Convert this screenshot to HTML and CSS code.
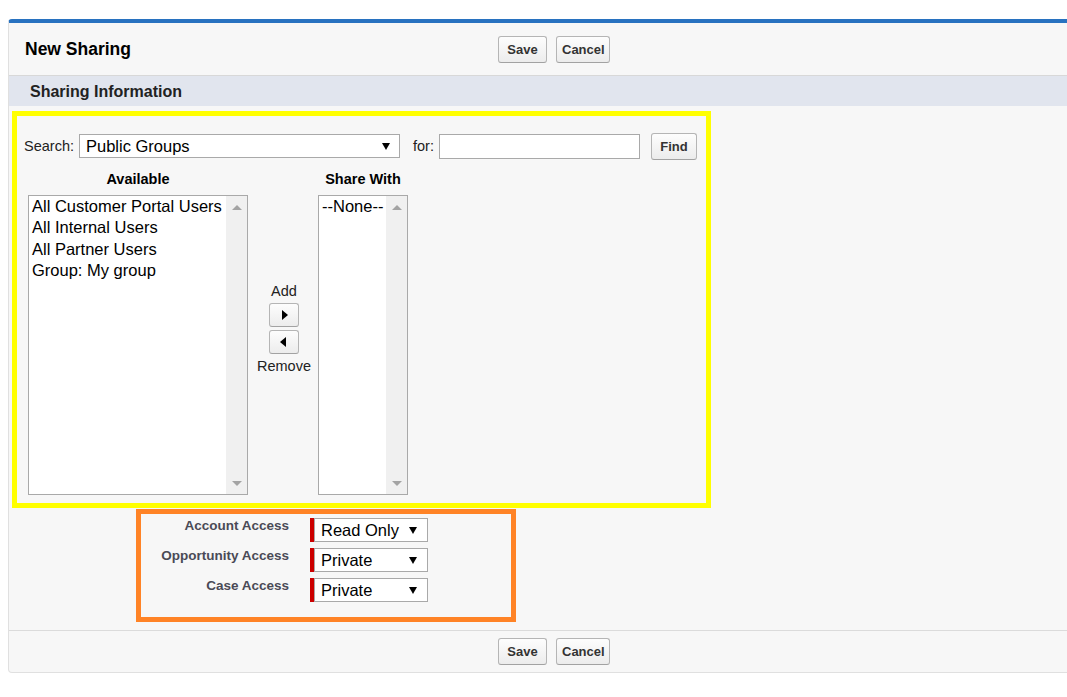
FILE: index.html
```html
<!DOCTYPE html>
<html lang="en">

<head>
    <meta charset="UTF-8">
    <title>New Sharing</title>
    <link rel="stylesheet" href="styles.css">
</head>

<body>
    <div class="page-block">
        <div class="pb-header">
            <h2 class="pb-title">New Sharing</h2>
            <div class="pb-buttons">
                <button class="btn" type="button">Save</button>
                <button class="btn" type="button">Cancel</button>
            </div>
        </div>

        <h3 class="section-title">Sharing Information</h3>

        <div class="hl-yellow">
            <div class="search-row">
                <span class="search-label">Search:</span>
                <div class="select select-search">
                    <span class="select-value">Public Groups</span>
                    <span class="caret"></span>
                </div>
                <span class="for-label">for:</span>
                <input class="text-input" type="text">
                <button class="btn btn-find" type="button">Find</button>
            </div>

            <div class="duel-list">
                <div class="col-head">Available</div>
                <div class="mover">
                    <div class="mover-label">Add</div>
                    <button class="btn btn-arrow" type="button"><span class="arrow-right"></span></button>
                    <button class="btn btn-arrow" type="button"><span class="arrow-left"></span></button>
                    <div class="mover-label">Remove</div>
                </div>
                <div class="col-head">Share With</div>

                <div class="listbox listbox-available">
                    <ul class="listbox-items">
                        <li>All Customer Portal Users</li>
                        <li>All Internal Users</li>
                        <li>All Partner Users</li>
                        <li>Group: My group</li>
                    </ul>
                    <div class="scroll-track">
                        <span class="scroll-up"></span>
                        <span class="scroll-down"></span>
                    </div>
                </div>

                <div class="listbox listbox-share">
                    <ul class="listbox-items">
                        <li>--None--</li>
                    </ul>
                    <div class="scroll-track">
                        <span class="scroll-up"></span>
                        <span class="scroll-down"></span>
                    </div>
                </div>
            </div>
        </div>

        <div class="hl-orange">
            <div class="access-row">
                <span class="access-label">Account Access</span>
                <span class="required-bar"></span>
                <div class="select select-access">
                    <span class="select-value">Read Only</span>
                    <span class="caret"></span>
                </div>
            </div>
            <div class="access-row">
                <span class="access-label">Opportunity Access</span>
                <span class="required-bar"></span>
                <div class="select select-access">
                    <span class="select-value">Private</span>
                    <span class="caret"></span>
                </div>
            </div>
            <div class="access-row">
                <span class="access-label">Case Access</span>
                <span class="required-bar"></span>
                <div class="select select-access">
                    <span class="select-value">Private</span>
                    <span class="caret"></span>
                </div>
            </div>
        </div>

        <div class="pb-footer">
            <div class="pb-buttons">
                <button class="btn" type="button">Save</button>
                <button class="btn" type="button">Cancel</button>
            </div>
        </div>
    </div>
</body>

</html>
```

FILE: styles.css
```css
* {
    box-sizing: border-box;
}

html,
body {
    overflow: hidden;
}

body {
    margin: 0;
    background: #fff;
    font-family: "Liberation Sans", Arial, sans-serif;
    color: #000;
}

.page-block {
    width: 1080px;
    margin: 19px 0 0 8px;
    background: #f7f7f7;
    border: 1px solid #e0e0e0;
    border-top: 4px solid #2872c0;
    border-radius: 4px;
}

/* header */
.pb-header {
    display: flex;
    align-items: center;
    height: 53px;
    border-bottom: 1px solid #d8d8d8;
}

.pb-title {
    width: 489px;
    margin: 0;
    padding-left: 16px;
    font-size: 17.5px;
    font-weight: bold;
    color: #000;
}

.pb-buttons {
    display: flex;
    gap: 9px;
}

.btn {
    height: 27px;
    padding: 0 5px;
    font-family: "Liberation Sans", Arial, sans-serif;
    font-size: 13px;
    font-weight: bold;
    color: #333;
    background: linear-gradient(#fdfdfd, #ececec);
    border: 1px solid #b5b5b5;
    border-bottom-color: #a2a2a2;
    border-radius: 3px;
}

.pb-buttons .btn:first-child {
    width: 49px;
}

.pb-buttons .btn:last-child {
    width: 54px;
}

/* section */
.section-title {
    height: 30px;
    margin: 0;
    padding: 1px 0 0 21px;
    line-height: 29px;
    font-size: 16px;
    font-weight: bold;
    color: #222;
    background: #e1e5ee;
}

.hl-yellow {
    width: 699px;
    margin: 5px 0 0 3px;
    padding: 16px 0 8px 7px;
    border: 5px solid #ffff00;
}

.search-row {
    display: flex;
    align-items: center;
    height: 28px;
    font-size: 14.5px;
    color: #222;
}

.search-label {
    margin-right: 5px;
}

.select {
    display: flex;
    align-items: center;
    justify-content: space-between;
    height: 24px;
    padding: 0 9px 0 6px;
    background: #fff;
    border: 1px solid #a9a9a9;
    font-size: 16.5px;
    color: #000;
}

.select-search {
    width: 321px;
}

.caret {
    width: 0;
    height: 0;
    border-left: 4px solid transparent;
    border-right: 4px solid transparent;
    border-top: 7px solid #000;
}

.for-label {
    margin: 0 5px 0 13px;
}

.text-input {
    width: 201px;
    height: 25px;
    padding: 0 4px;
    background: #fff;
    border: 1px solid #a9a9a9;
}

.btn-find {
    width: 46px;
    margin-left: 11px;
}

/* available / share with */
.duel-list {
    display: grid;
    grid-template-columns: 220px 70px 90px;
    grid-template-rows: auto 300px;
    margin: 10px 0 0 4px;
}

.col-head {
    padding-bottom: 7px;
    line-height: 18px;
    font-size: 14.5px;
    font-weight: bold;
    text-align: center;
}

.mover {
    grid-column: 2;
    grid-row: 1 / 3;
    align-self: center;
    display: flex;
    flex-direction: column;
    align-items: center;
    gap: 3px;
    margin: 0 0 8px 2px;
    font-size: 14.5px;
    color: #222;
}

.mover-label {
    line-height: 18px;
}

.btn-arrow {
    display: flex;
    align-items: center;
    justify-content: center;
    width: 30px;
    height: 24px;
    padding: 0;
}

.arrow-right {
    margin-left: 2px;
    border-top: 5.5px solid transparent;
    border-bottom: 5.5px solid transparent;
    border-left: 6px solid #000;
}

.arrow-left {
    margin-right: 2px;
    border-top: 5.5px solid transparent;
    border-bottom: 5.5px solid transparent;
    border-right: 6px solid #000;
}

.listbox {
    display: flex;
    background: #fff;
    border: 1px solid #a9a9a9;
}

.listbox-available {
    grid-column: 1;
    grid-row: 2;
}

.listbox-share {
    grid-column: 3;
    grid-row: 2;
}

.listbox-items {
    flex: 1;
    margin: 0;
    padding: 0 0 0 3px;
    list-style: none;
    font-size: 16.5px;
    line-height: 21.3px;
    white-space: nowrap;
}

.scroll-track {
    display: flex;
    flex-direction: column;
    justify-content: space-between;
    align-items: center;
    width: 21px;
    padding: 9px 0 8px;
    background: #f0f0f0;
}

.scroll-up {
    border-left: 5px solid transparent;
    border-right: 5px solid transparent;
    border-bottom: 5px solid #a3a3a3;
}

.scroll-down {
    border-left: 5px solid transparent;
    border-right: 5px solid transparent;
    border-top: 5px solid #a3a3a3;
}

/* access levels */
.hl-orange {
    display: flex;
    flex-direction: column;
    gap: 6px;
    width: 380px;
    margin: 1px 0 0 127px;
    padding: 4px 0 15px;
    border: 5px solid #ff8326;
}

.access-row {
    display: flex;
    align-items: flex-start;
    height: 24px;
}

.access-label {
    width: 148px;
    margin-right: 21px;
    line-height: 15px;
    font-size: 13.5px;
    font-weight: bold;
    color: #4a4a56;
    text-align: right;
    white-space: nowrap;
}

.required-bar {
    width: 4px;
    height: 24px;
    background: #c00;
}

.select-access {
    width: 114px;
    padding-right: 10px;
}

.pb-footer {
    display: flex;
    align-items: center;
    margin-top: 8px;
    padding: 7px 0 7px 489px;
    border-top: 1px solid #dbdbdb;
}
```
